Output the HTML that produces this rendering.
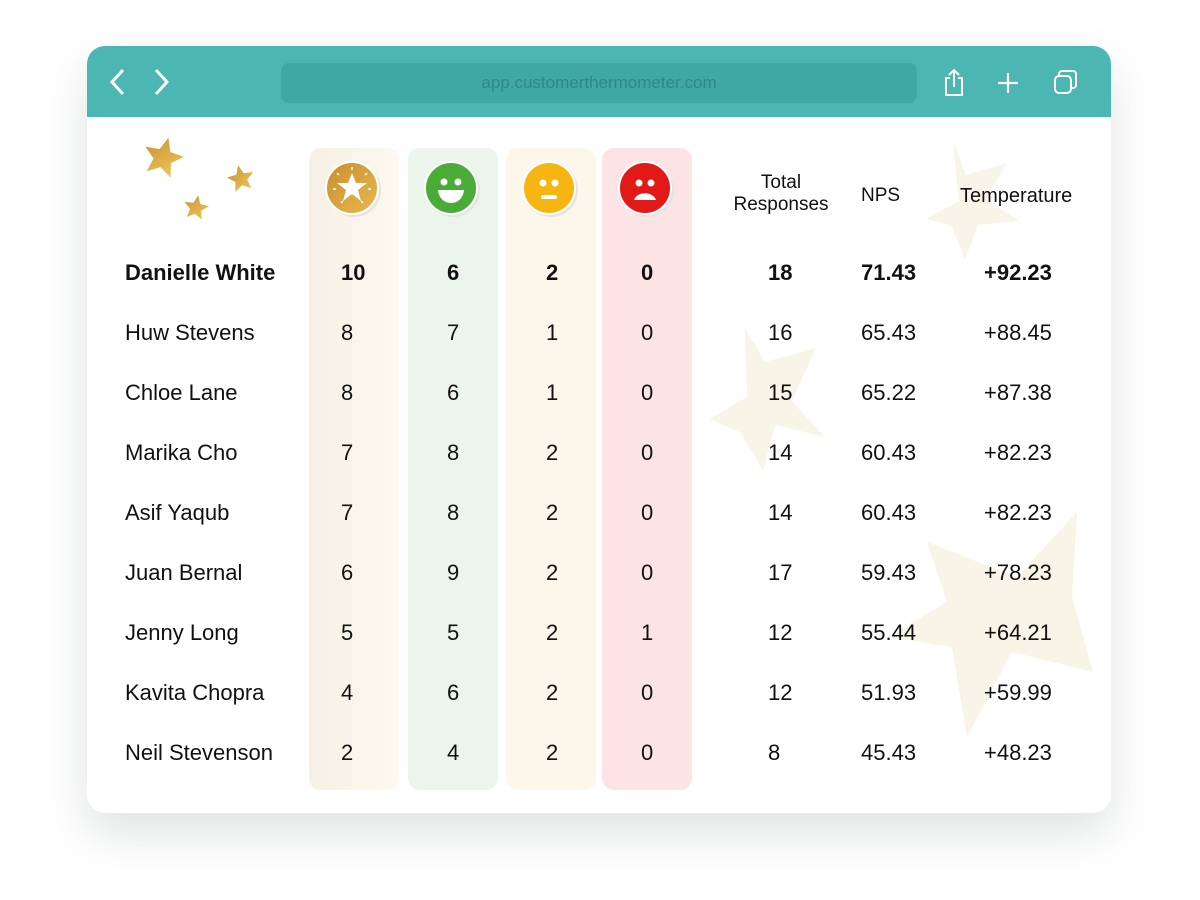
<!DOCTYPE html>
<html><head><style>
*{margin:0;padding:0;box-sizing:border-box}
body{width:1200px;height:900px;background:#fff;font-family:"Liberation Sans",sans-serif;position:relative;overflow:hidden}
.card{position:absolute;left:87px;top:46px;width:1024px;height:767px;background:#fff;border-radius:18px;overflow:hidden;box-shadow:0 20px 45px rgba(60,80,80,.16)}
.bar{position:absolute;left:0;top:0;width:100%;height:71px;background:#4bb6b2}
.url{position:absolute;left:194px;top:17px;width:636px;height:40px;border-radius:8px;background:#40a8a2;color:#2c8a84;font-size:17px;text-align:center;line-height:40px}
.col{position:absolute;top:102px;width:90px;height:642px;border-radius:12px}
.ic{position:absolute;top:115px;width:54px;height:54px;border-radius:50%;box-shadow:2px 2px 0 #e4e4e4;border:2px solid #fff}
.t{position:absolute;font-size:22px;color:#111;line-height:26px;white-space:nowrap}
.h{position:absolute;font-size:19px;color:#111;line-height:22px;text-align:center}
.b{font-weight:bold}
</style></head><body>
<div class="card">
<div class="bar">
<svg style="position:absolute;left:20px;top:22px" width="70" height="28" viewBox="0 0 70 28"><path d="M16 2 L5 14 L16 26" stroke="#fff" stroke-width="3" fill="none"/><path d="M49 2 L60 14 L49 26" stroke="#fff" stroke-width="3" fill="none"/></svg>
<div class="url">app.customerthermometer.com</div>
<svg style="position:absolute;left:856px;top:22px" width="140" height="30" viewBox="0 0 140 30"><path d="M7 10 H3 V27 H19 V10 H15 M11 19 V2 M6 7 L11 2 L16 7" stroke="#fff" stroke-width="2" fill="none"/><path d="M65 5 V25 M55 15 H75" stroke="#fff" stroke-width="2.2"/><rect x="112" y="8" width="16" height="17" rx="4" stroke="#fff" stroke-width="2" fill="none"/><path d="M116 8 V6 a3 3 0 0 1 3-3 H130 a3 3 0 0 1 3 3 V17 a3 3 0 0 1 -3 3 H128" stroke="#fff" stroke-width="2" fill="none"/></svg>
</div>
<svg style="position:absolute;left:0;top:71px" width="1024" height="700">
<defs><linearGradient id="g" x1="0" y1="0" x2="1" y2="1"><stop offset="0" stop-color="#c8902e"/><stop offset="1" stop-color="#f0c860"/></linearGradient>
<polygon id="s" points="0,-1 0.265,-0.364 0.951,-0.309 0.428,0.139 0.588,0.809 0,0.45 -0.588,0.809 -0.428,0.139 -0.951,-0.309 -0.265,-0.364"/></defs>
<g fill="#f8f2e4" opacity=".85">
<polygon points="866,24 879,58 920,46 898,82 932,104 891,108 878,142 864,108 839,102 872,84"/>
<polygon points="658,211 678,245 729,231 705,284 738,320 688,308 676,354 654,316 623,302 660,280"/>
<polygon points="840,425 930,460 990,395 985,480 1006,555 925,535 880,620 865,530 801,520 860,485"/>
</g>
<use href="#s" fill="url(#g)" transform="translate(76,41) rotate(15) scale(21)"/>
<use href="#s" fill="url(#g)" transform="translate(154,62) rotate(-12) scale(14)"/>
<use href="#s" fill="url(#g)" transform="translate(109,91) rotate(10) scale(13)"/>
</svg>
<div class="col" style="left:222px;background:linear-gradient(90deg,#f6efe4,#fdf9f0)"></div>
<div class="col" style="left:321px;background:#ebf5ec"></div>
<div class="col" style="left:419px;background:#fdf6ea"></div>
<div class="col" style="left:515px;background:#fde4e4"></div>
<div class="ic" style="left:238px;background:linear-gradient(135deg,#c8902e,#e8b850)"><svg width="50" height="50" viewBox="0 0 50 50"><polygon fill="#fff" points="25,10 29,20 40,20 31,27 34,38 25,31 16,38 19,27 10,20 21,20"/><g stroke="#fff" stroke-width="1.5"><path d="M25 4 V7 M40 10 L38 12 M44 26 H41 M10 10 L12 12 M6 26 H9 M14 40 L16 38 M36 40 L34 38"/></g></svg></div>
<div class="ic" style="left:337px;background:#49ac36"><svg width="50" height="50" viewBox="0 0 50 50"><circle cx="18" cy="19" r="3.5" fill="#fff"/><circle cx="32" cy="19" r="3.5" fill="#fff"/><path d="M12 27 H38 C37 36 31 40 25 40 C19 40 13 36 12 27Z" fill="#fff"/></svg></div>
<div class="ic" style="left:435px;background:#f7b514"><svg width="50" height="50" viewBox="0 0 50 50"><circle cx="19" cy="20" r="3.5" fill="#fff"/><circle cx="31" cy="20" r="3.5" fill="#fff"/><rect x="17" y="32" width="16" height="4" rx="2" fill="#fff"/></svg></div>
<div class="ic" style="left:531px;background:#e11a17"><svg width="50" height="50" viewBox="0 0 50 50"><circle cx="19" cy="20" r="3.5" fill="#fff"/><circle cx="31" cy="20" r="3.5" fill="#fff"/><path d="M14 37 C17 28 33 28 36 37Z" fill="#fff"/></svg></div>
<div class="h" style="left:624px;top:126px;width:140px">Total<br>Responses</div>
<div class="h" style="left:774px;top:139px">NPS</div>
<div class="h" style="left:873px;top:139px;font-size:20px">Temperature</div>
</div>
<div style="position:absolute;left:0;top:0">
<div class="t b" style="left:125px;top:260px">Danielle White</div><div class="t b" style="left:341px;top:260px">10</div><div class="t b" style="left:447px;top:260px">6</div><div class="t b" style="left:546px;top:260px">2</div><div class="t b" style="left:641px;top:260px">0</div><div class="t b" style="left:768px;top:260px">18</div><div class="t b" style="left:861px;top:260px">71.43</div><div class="t b" style="left:984px;top:260px">+92.23</div>
<div class="t" style="left:125px;top:320px">Huw Stevens</div><div class="t" style="left:341px;top:320px">8</div><div class="t" style="left:447px;top:320px">7</div><div class="t" style="left:546px;top:320px">1</div><div class="t" style="left:641px;top:320px">0</div><div class="t" style="left:768px;top:320px">16</div><div class="t" style="left:861px;top:320px">65.43</div><div class="t" style="left:984px;top:320px">+88.45</div>
<div class="t" style="left:125px;top:380px">Chloe Lane</div><div class="t" style="left:341px;top:380px">8</div><div class="t" style="left:447px;top:380px">6</div><div class="t" style="left:546px;top:380px">1</div><div class="t" style="left:641px;top:380px">0</div><div class="t" style="left:768px;top:380px">15</div><div class="t" style="left:861px;top:380px">65.22</div><div class="t" style="left:984px;top:380px">+87.38</div>
<div class="t" style="left:125px;top:440px">Marika Cho</div><div class="t" style="left:341px;top:440px">7</div><div class="t" style="left:447px;top:440px">8</div><div class="t" style="left:546px;top:440px">2</div><div class="t" style="left:641px;top:440px">0</div><div class="t" style="left:768px;top:440px">14</div><div class="t" style="left:861px;top:440px">60.43</div><div class="t" style="left:984px;top:440px">+82.23</div>
<div class="t" style="left:125px;top:500px">Asif Yaqub</div><div class="t" style="left:341px;top:500px">7</div><div class="t" style="left:447px;top:500px">8</div><div class="t" style="left:546px;top:500px">2</div><div class="t" style="left:641px;top:500px">0</div><div class="t" style="left:768px;top:500px">14</div><div class="t" style="left:861px;top:500px">60.43</div><div class="t" style="left:984px;top:500px">+82.23</div>
<div class="t" style="left:125px;top:560px">Juan Bernal</div><div class="t" style="left:341px;top:560px">6</div><div class="t" style="left:447px;top:560px">9</div><div class="t" style="left:546px;top:560px">2</div><div class="t" style="left:641px;top:560px">0</div><div class="t" style="left:768px;top:560px">17</div><div class="t" style="left:861px;top:560px">59.43</div><div class="t" style="left:984px;top:560px">+78.23</div>
<div class="t" style="left:125px;top:620px">Jenny Long</div><div class="t" style="left:341px;top:620px">5</div><div class="t" style="left:447px;top:620px">5</div><div class="t" style="left:546px;top:620px">2</div><div class="t" style="left:641px;top:620px">1</div><div class="t" style="left:768px;top:620px">12</div><div class="t" style="left:861px;top:620px">55.44</div><div class="t" style="left:984px;top:620px">+64.21</div>
<div class="t" style="left:125px;top:680px">Kavita Chopra</div><div class="t" style="left:341px;top:680px">4</div><div class="t" style="left:447px;top:680px">6</div><div class="t" style="left:546px;top:680px">2</div><div class="t" style="left:641px;top:680px">0</div><div class="t" style="left:768px;top:680px">12</div><div class="t" style="left:861px;top:680px">51.93</div><div class="t" style="left:984px;top:680px">+59.99</div>
<div class="t" style="left:125px;top:740px">Neil Stevenson</div><div class="t" style="left:341px;top:740px">2</div><div class="t" style="left:447px;top:740px">4</div><div class="t" style="left:546px;top:740px">2</div><div class="t" style="left:641px;top:740px">0</div><div class="t" style="left:768px;top:740px">8</div><div class="t" style="left:861px;top:740px">45.43</div><div class="t" style="left:984px;top:740px">+48.23</div>
</div>
</body></html>
